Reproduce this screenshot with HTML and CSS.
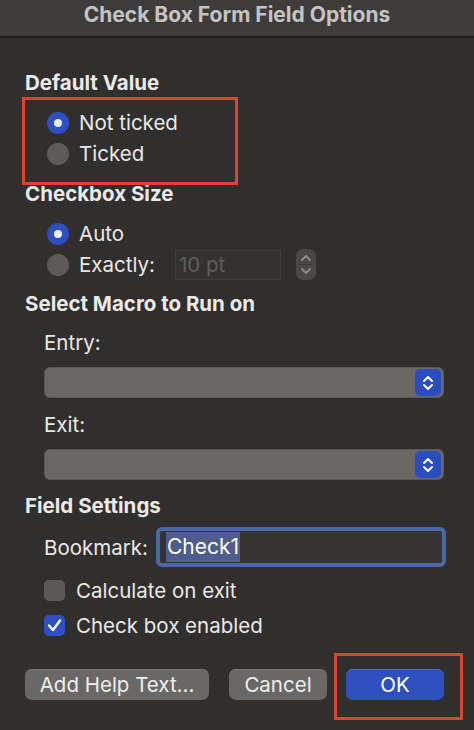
FILE: index.html
```html
<!DOCTYPE html>
<html>
<head>
<meta charset="utf-8">
<link rel="stylesheet" href="styles.css">
</head>
<body>
<div class="dialog">
  <div class="titlebar">Check Box Form Field Options</div>
  <div class="content">
    <div class="heading h-first">Default Value</div>
    <div class="options">
      <div class="row"><span class="radio on"></span><span>Not ticked</span></div>
      <div class="row"><span class="radio"></span><span>Ticked</span></div>
    </div>

    <div class="heading h-second">Checkbox Size</div>
    <div class="options">
      <div class="row"><span class="radio on"></span><span>Auto</span></div>
      <div class="row">
        <span class="radio"></span><span class="exact-label">Exactly:</span>
        <span class="pt-input">10 pt</span>
        <span class="stepper">
          <svg width="20" height="31" viewBox="0 0 20 31"><path d="M6 11 L10 7 L14 11" fill="none" stroke="#8e8c8a" stroke-width="1.8" stroke-linecap="round" stroke-linejoin="round"/><path d="M6 20 L10 24 L14 20" fill="none" stroke="#8e8c8a" stroke-width="1.8" stroke-linecap="round" stroke-linejoin="round"/><line x1="2" y1="15.5" x2="18" y2="15.5" stroke="#3d3b3a" stroke-width="1"/></svg>
        </span>
      </div>
    </div>

    <div class="heading h-third">Select Macro to Run on</div>
    <div class="sub">
      <div class="label l-entry">Entry:</div>
      <div class="select">
        <span class="sel-btn"><svg width="20" height="22" viewBox="0 0 20 22"><path d="M6 9 L10 5 L14 9" fill="none" stroke="#fff" stroke-width="2" stroke-linecap="round" stroke-linejoin="round"/><path d="M6 13 L10 17 L14 13" fill="none" stroke="#fff" stroke-width="2" stroke-linecap="round" stroke-linejoin="round"/></svg></span>
      </div>
      <div class="label l-exit">Exit:</div>
      <div class="select">
        <span class="sel-btn"><svg width="20" height="22" viewBox="0 0 20 22"><path d="M6 9 L10 5 L14 9" fill="none" stroke="#fff" stroke-width="2" stroke-linecap="round" stroke-linejoin="round"/><path d="M6 13 L10 17 L14 13" fill="none" stroke="#fff" stroke-width="2" stroke-linecap="round" stroke-linejoin="round"/></svg></span>
      </div>
    </div>

    <div class="heading h-fourth">Field Settings</div>
    <div class="sub">
      <div class="bookmark-row">
        <span class="bm-label">Bookmark:</span>
        <span class="bm-input"><span class="sel-text">Check1</span></span>
      </div>
      <div class="check-row first-check"><span class="checkbox"></span><span>Calculate on exit</span></div>
      <div class="check-row"><span class="checkbox on"><svg width="21" height="21" viewBox="0 0 21 21"><path d="M5 10.5 L9 15 L16 5.5" fill="none" stroke="#fff" stroke-width="2.4" stroke-linecap="round" stroke-linejoin="round"/></svg></span><span>Check box enabled</span></div>
    </div>

    <div class="buttons">
      <button class="btn help">Add Help Text...</button>
      <button class="btn cancel">Cancel</button>
      <button class="btn ok">OK</button>
    </div>
  </div>
  <div class="annot annot-default"></div>
  <div class="annot annot-ok"></div>
</div>
</body>
</html>
```

FILE: styles.css
```css
html, body {
  margin: 0;
  padding: 0;
  background: #312f2d;
}
body {
  width: 474px;
  height: 730px;
  overflow: hidden;
  font-family: Inter, "Liberation Sans", sans-serif;
  color: #e9e8e7;
}
.dialog {
  position: relative;
  width: 474px;
  height: 730px;
  background: #312f2d;
}
.titlebar {
  height: 36px;
  line-height: 30px;
  background: #3e3c3b;
  border-bottom: 2px solid #1f1e1d;
  color: #c5c4c3;
  font-weight: 700;
  font-size: 21px;
  text-align: center;
}
.content {
  padding: 0 25px;
  display: flex;
  flex-direction: column;
}
.heading {
  font-weight: 700;
  font-size: 20.5px;
  line-height: 24px;
  height: 24px;
  color: #ebeae9;
}
.h-first { margin-top: 33px; }
.h-second { margin-top: 13px; }
.h-third { margin-top: 12px; }
.h-fourth { margin-top: 14px; }
.options {
  margin-top: 12px;
  padding-left: 22px;
  display: flex;
  flex-direction: column;
}
.row {
  height: 31px;
  display: flex;
  align-items: center;
  gap: 10px;
  font-size: 20.5px;
}
.radio {
  width: 22px;
  height: 22px;
  border-radius: 50%;
  background: #5d5b5a;
  flex: none;
  position: relative;
  box-sizing: border-box;
}
.radio.on {
  background: #2f4fc1;
}
.radio.on::after {
  content: "";
  position: absolute;
  left: 7px;
  top: 7px;
  width: 8px;
  height: 8px;
  border-radius: 50%;
  background: #e8ecf8;
}
.exact-label {
  width: 86px;
  flex: none;
}
.pt-input {
  width: 106px;
  height: 30px;
  box-sizing: border-box;
  border: 1px solid #403e3d;
  background: #34322f;
  color: #5f5d5b;
  font-size: 20.5px;
  line-height: 28px;
  padding-left: 3px;
  margin-right: 5px;
}
.stepper {
  width: 20px;
  height: 31px;
  border-radius: 7px;
  background: #4a4846;
  display: flex;
}
.sub {
  padding-left: 19px;
  display: flex;
  flex-direction: column;
}
.label {
  font-size: 20.5px;
  line-height: 24px;
  height: 24px;
}
.l-entry { margin-top: 15px; }
.l-exit { margin-top: 15px; }
.select {
  margin-top: 12px;
  width: 400px;
  height: 31px;
  box-sizing: border-box;
  background: #6a6866;
  border: 1px solid #5a5856;
  border-radius: 6px;
  display: flex;
  justify-content: flex-end;
  align-items: center;
  padding-right: 2px;
}
.sel-btn {
  width: 26px;
  height: 27px;
  border-radius: 5px;
  background: #2c4dbf;
  display: flex;
  align-items: center;
  justify-content: center;
}
.bookmark-row {
  margin-top: 9px;
  height: 40px;
  display: flex;
  align-items: center;
  font-size: 20.5px;
}
.bm-label {
  width: 112px;
  flex: none;
}
.bm-input {
  width: 290px;
  height: 40px;
  box-sizing: border-box;
  border: 4px solid #4b67a6;
  border-radius: 6px;
  background: #353331;
  display: flex;
  align-items: center;
  padding-left: 6px;
}
.sel-text {
  background: #4e5d8e;
  color: #ffffff;
  font-size: 21px;
  line-height: 30px;
  padding: 0 1px 0 1px;
}
.check-row {
  height: 35px;
  display: flex;
  align-items: center;
  gap: 11px;
  font-size: 20.5px;
}
.first-check { margin-top: 6px; }
.checkbox {
  width: 21px;
  height: 21px;
  border-radius: 5px;
  background: #5b5958;
  flex: none;
  display: flex;
}
.checkbox.on {
  background: #2f50c3;
}
.buttons {
  margin-top: 26px;
  display: flex;
  gap: 20px;
}
.btn {
  height: 31px;
  border: none;
  border-radius: 7px;
  background: #6a6866;
  color: #eeeeed;
  font-family: Inter, "Liberation Sans", sans-serif;
  font-size: 20.5px;
  padding: 0;
  box-shadow: 0 1px 0 #7a7876 inset;
}
.help { width: 184px; }
.cancel { width: 98px; }
.ok {
  width: 98px;
  margin-left: -1px;
  background: #2d4fc0;
  color: #ffffff;
  box-shadow: 0 1px 0 #4a69d0 inset;
}
.annot {
  position: absolute;
  border: 3px solid #e2412e;
  box-sizing: border-box;
}
.annot-default {
  left: 22px;
  top: 97px;
  width: 216px;
  height: 88px;
}
.annot-ok {
  left: 334px;
  top: 653px;
  width: 129px;
  height: 67px;
}
```
